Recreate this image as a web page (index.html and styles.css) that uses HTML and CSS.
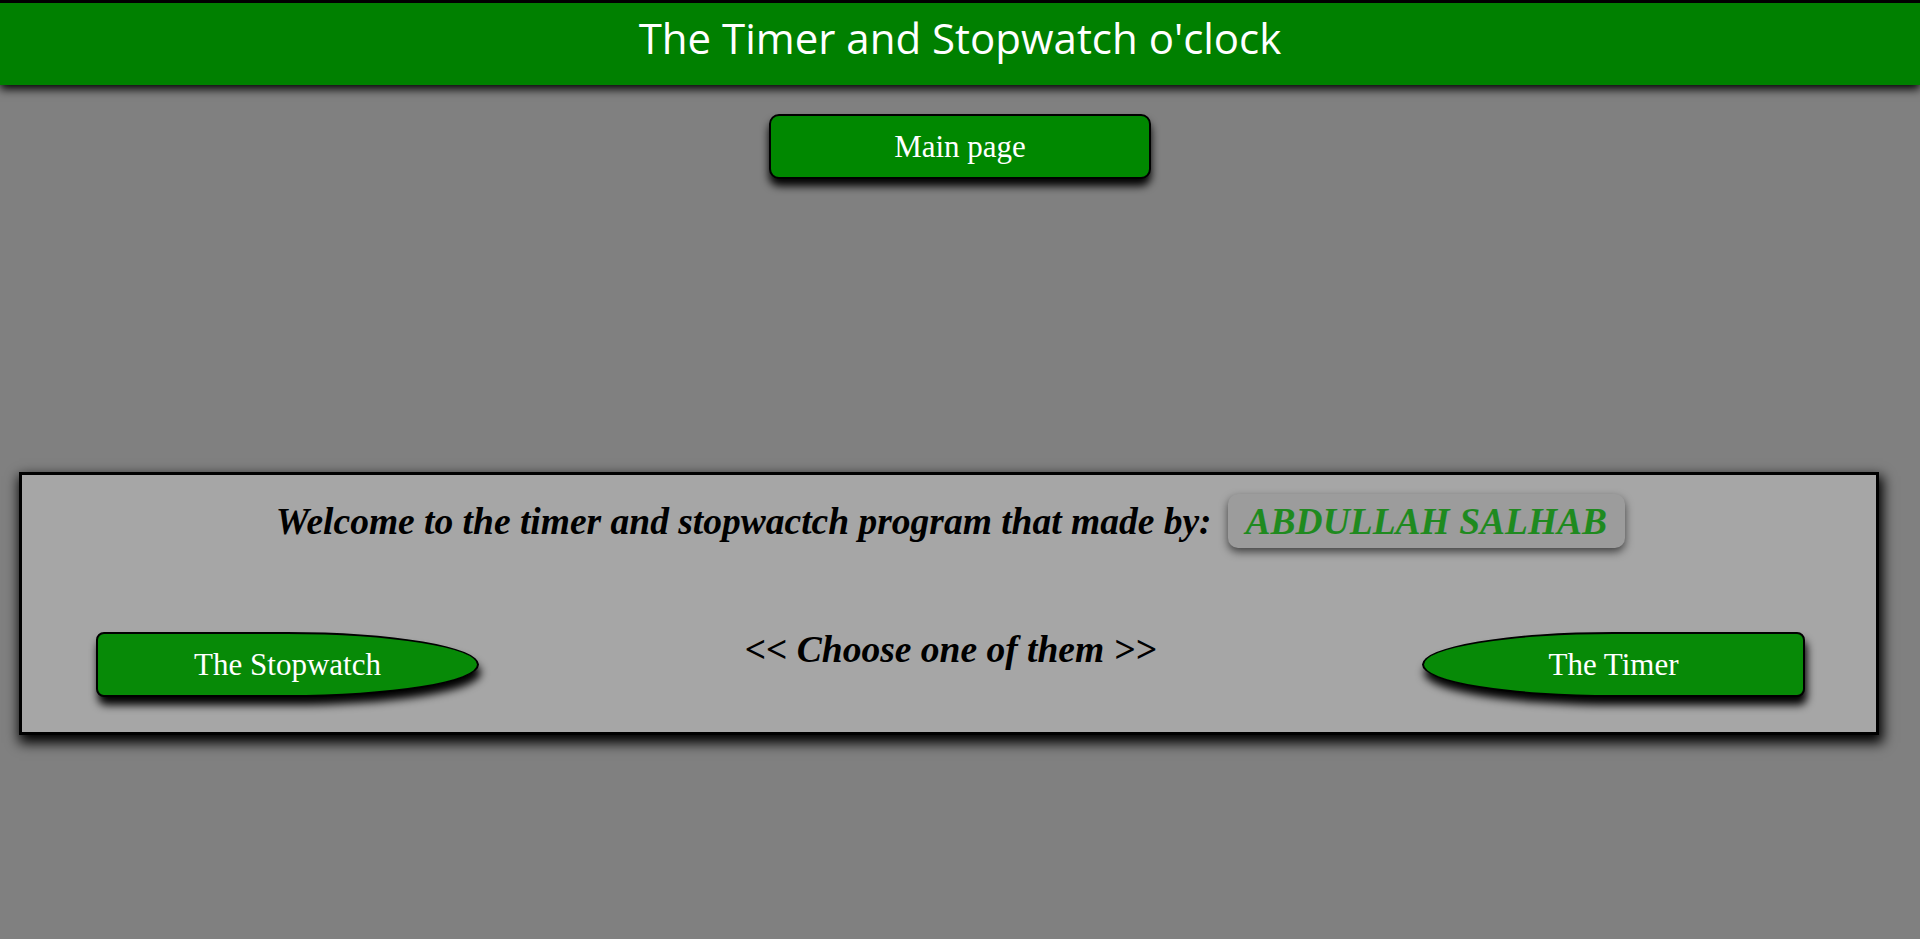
FILE: index.html
```html
<!DOCTYPE html>
<html lang="en">
<head>
<meta charset="utf-8">
<title>The Timer and Stopwatch o'clock</title>
<link rel="stylesheet" href="styles.css">
</head>
<body>
  <header class="topbar">
    <h1 class="title">The Timer and Stopwatch o'clock</h1>
  </header>
  <nav class="nav">
    <a class="main-btn" href="#">Main page</a>
  </nav>
  <section class="panel">
    <div class="welcome">
      <span class="welcome-text">Welcome to the timer and stopwactch program that made by:</span>
      <span class="author">ABDULLAH SALHAB</span>
    </div>
    <div class="choices">
      <a class="choice choice-left" href="#">The Stopwatch</a>
      <span class="choose">&lt;&lt; Choose one of them &gt;&gt;</span>
      <a class="choice choice-right" href="#">The Timer</a>
    </div>
  </section>
</body>
</html>
```
FILE: styles.css
```css
* { box-sizing: border-box; }

html, body {
  margin: 0;
  padding: 0;
}

body {
  background: #808080;
  font-family: "Liberation Serif", "Times New Roman", serif;
  min-height: 939px;
}

.topbar {
  background: #008000;
  border-top: 3px solid #000;
  height: 85px;
  box-shadow: 0 4px 9px #000;
  display: flex;
  justify-content: center;
  align-items: flex-start;
}

.title {
  margin: 0;
  padding-top: 8px;
  color: #fff;
  font-family: "Open Sans", "DejaVu Sans", sans-serif;
  font-weight: 400;
  font-size: 42px;
  line-height: 54px;
}

.nav {
  display: flex;
  justify-content: center;
  padding-top: 29px;
}

.main-btn {
  width: 382px;
  height: 65px;
  display: flex;
  align-items: center;
  justify-content: center;
  background: #008800;
  border: 2px solid #000;
  border-radius: 10px;
  box-shadow: 0 7px 9px #000;
  color: #fff;
  text-decoration: none;
  font-size: 31px;
}

.panel {
  margin: 293px 0 0 19px;
  width: 1860px;
  background: #a6a6a6;
  border: 3px solid #000;
  box-shadow: 2px 6px 12px 2px #000;
  padding: 19px 71px 35px 74px;
}

.welcome {
  display: flex;
  justify-content: center;
  align-items: center;
  font-size: 37.5px;
  font-weight: bold;
  font-style: italic;
}

.welcome-text {
  color: #000;
}

.author {
  margin-left: 16px;
  height: 54px;
  padding: 0 18px;
  display: flex;
  align-items: center;
  background: #9c9c9c;
  border-radius: 10px;
  box-shadow: 0 4px 8px rgba(0, 0, 0, 0.6);
  color: #1f8a1f;
}

.choices {
  margin-top: 81px;
  display: flex;
  justify-content: space-between;
  align-items: flex-start;
}

.choose {
  font-size: 37.5px;
  font-weight: bold;
  font-style: italic;
  color: #000;
  line-height: 41px;
}

.choice {
  margin-top: 3px;
  width: 383px;
  height: 65px;
  display: flex;
  align-items: center;
  justify-content: center;
  background: #078a07;
  border: 2px solid #000;
  box-shadow: 2px 8px 8px #000;
  color: #fff;
  text-decoration: none;
  font-size: 31px;
}

.choice-left {
  border-radius: 8px 50% 50% 8px / 8px 50% 50% 8px;
}

.choice-right {
  border-radius: 50% 8px 8px 50% / 50% 8px 8px 50%;
}
```
